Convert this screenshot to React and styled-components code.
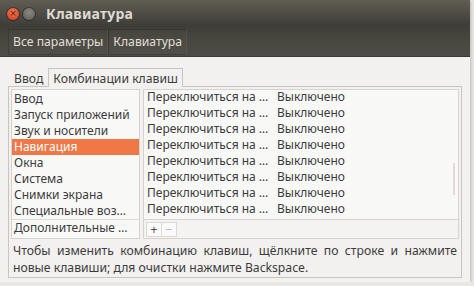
import React from "react"
import styled, { createGlobalStyle } from "styled-components"

const GlobalStyle = createGlobalStyle`
  html, body {
    margin: 0;
    padding: 0;
    background: #e9e7e4;
  }
  body {
    font-family: "Noto Sans", "DejaVu Sans", sans-serif;
    font-size: 12px;
    color: #3c3c3c;
  }
`

const Window = styled.div`
  width: 470px;
  height: 282px;
  display: flex;
  flex-direction: column;
  background: #f2f1f0;
  box-shadow: 1px 1px 3px rgba(0, 0, 0, 0.2);
  overflow: hidden;
`

const Header = styled.div`
  height: 56px;
  flex-shrink: 0;
  display: flex;
  flex-direction: column;
  background: linear-gradient(
    to bottom,
    #605d53 0%,
    #4a4842 30%,
    #3e3d38 46%,
    #48473f 70%,
    #4d4c46 100%
  );
  border-bottom: 1px solid #3a3935;
`

const TitleBar = styled.div`
  height: 27px;
  display: flex;
  align-items: center;
  padding-left: 7px;
  gap: 4px;
`

const WinButton = styled.span`
  width: 12px;
  height: 12px;
  border-radius: 50%;
  display: flex;
  align-items: center;
  justify-content: center;
  background: ${(p) =>
    p.$close
      ? "radial-gradient(circle at 50% 35%, #f27a5a, #dc4b27 70%)"
      : "radial-gradient(circle at 50% 35%, #8a8780, #6a6861 70%)"};
  box-shadow: 0 0 0 1px rgba(0, 0, 0, 0.35);
  color: #4b1a0c;
  font-size: 9px;
  line-height: 1;
  font-family: "DejaVu Sans", sans-serif;
`

const Title = styled.div`
  margin-left: 7px;
  font-weight: bold;
  font-size: 14px;
  color: #dfdbd2;
  letter-spacing: 0.2px;
`

const Toolbar = styled.div`
  flex: 1;
  display: flex;
  align-items: center;
  padding-left: 8px;
`

const NavButton = styled.div`
  height: 24px;
  display: flex;
  align-items: center;
  padding: 0 4px;
  color: #e3dfd7;
  font-size: 12.2px;
  border: 1px solid rgba(0, 0, 0, 0.18);
  border-right-color: rgba(255, 255, 255, 0.06);
  background: rgba(255, 255, 255, 0.02);
  & + & {
    border-left: 1px solid rgba(0, 0, 0, 0.25);
  }
`

const Body = styled.div`
  flex: 1;
  display: flex;
  flex-direction: column;
  padding: 10px 8px 4px 8px;
`

const Tabs = styled.div`
  display: flex;
  align-items: flex-end;
  padding-left: 3px;
  height: 19px;
  flex-shrink: 0;
`

const Tab = styled.div`
  height: 18px;
  display: flex;
  align-items: center;
  padding: 0 4px 0 ${(p) => (p.$active ? "4px" : "2px")};
  font-size: 12.2px;
  color: #3c3c3c;
  background: ${(p) => (p.$active ? "#f2f1f0" : "transparent")};
  border: 1px solid ${(p) => (p.$active ? "#c8c5c0" : "transparent")};
  border-bottom: none;
  margin-bottom: -1px;
  position: relative;
  z-index: 1;
`

const Panel = styled.div`
  flex: 1;
  display: flex;
  flex-direction: column;
  border: 1px solid #c8c5c0;
  padding: 2px 2px 0 2px;
`

const Lists = styled.div`
  display: flex;
  gap: 3px;
  height: 150px;
  flex-shrink: 0;
`

const SectionList = styled.div`
  width: 127px;
  border: 1px solid #d6d3cf;
  background: #f8f8f7;
  display: flex;
  flex-direction: column;
  padding-top: 1px;
  overflow: hidden;
`

const SectionItem = styled.div`
  height: 16px;
  flex-shrink: 0;
  line-height: 16px;
  padding-left: 2px;
  white-space: nowrap;
  background: ${(p) => (p.$selected ? "#f07746" : "transparent")};
  color: ${(p) => (p.$selected ? "#ffffff" : "#3c3c3c")};
  border-top: ${(p) => (p.$divided ? "1px solid #dcd9d5" : "none")};
`

const ShortcutPane = styled.div`
  flex: 1;
  display: flex;
  flex-direction: column;
`

const ShortcutList = styled.div`
  flex: 1;
  border: 1px solid #d6d3cf;
  background: #f8f8f7;
  overflow: hidden;
  position: relative;
`

const Rows = styled.div`
  margin-top: -1px;
`

const Row = styled.div`
  display: flex;
  height: 16px;
  line-height: 16px;
  padding-left: 3px;
  white-space: nowrap;
`

const Action = styled.span`
  width: 130px;
  overflow: hidden;
`

const Scrollbar = styled.div`
  position: absolute;
  right: 3px;
  top: 73px;
  width: 2px;
  height: 32px;
  background: #ecd8d0;
`

const ListTools = styled.div`
  height: 18px;
  flex-shrink: 0;
  border: 1px solid #d6d3cf;
  border-top: none;
  background: #f4f3f2;
  display: flex;
  align-items: center;
  padding-left: 2px;
`

const ToolButton = styled.span`
  width: 14px;
  height: 13px;
  display: flex;
  align-items: center;
  justify-content: center;
  font-size: 12px;
  color: ${(p) => (p.$disabled ? "#b5b2ad" : "#4a4a4a")};
  border: 1px solid #dcd9d5;
  background: #fafafa;
  & + & {
    border-left: none;
  }
`

const Hint = styled.p`
  margin: 3px 2px 0 2px;
  font-size: 12.2px;
  line-height: 17px;
  text-align: justify;
  color: #3c3c3c;
`

const sections = [
  "Ввод",
  "Запуск приложений",
  "Звук и носители",
  "Навигация",
  "Окна",
  "Система",
  "Снимки экрана",
  "Специальные воз…",
  "Дополнительные …",
]

const App = () => (
  <>
    <GlobalStyle />
    <Window>
      <Header>
        <TitleBar>
          <WinButton $close>×</WinButton>
          <WinButton />
          <Title>Клавиатура</Title>
        </TitleBar>
        <Toolbar>
          <NavButton>Все параметры</NavButton>
          <NavButton>Клавиатура</NavButton>
        </Toolbar>
      </Header>
      <Body>
        <Tabs>
          <Tab>Ввод</Tab>
          <Tab $active>Комбинации клавиш</Tab>
        </Tabs>
        <Panel>
          <Lists>
            <SectionList>
              {sections.map((name, i) => (
                <SectionItem
                  key={name}
                  $selected={name === "Навигация"}
                  $divided={i === sections.length - 1}
                >
                  {name}
                </SectionItem>
              ))}
            </SectionList>
            <ShortcutPane>
              <ShortcutList>
                <Rows>
                  {Array.from({ length: 9 }).map((_, i) => (
                    <Row key={i}>
                      <Action>Переключиться на …</Action>
                      <span>Выключено</span>
                    </Row>
                  ))}
                </Rows>
                <Scrollbar />
              </ShortcutList>
              <ListTools>
                <ToolButton>+</ToolButton>
                <ToolButton $disabled>−</ToolButton>
              </ListTools>
            </ShortcutPane>
          </Lists>
          <Hint>
            Чтобы изменить комбинацию клавиш, щёлкните по строке и нажмите
            новые клавиши; для очистки нажмите Backspace.
          </Hint>
        </Panel>
      </Body>
    </Window>
  </>
)

export default App
